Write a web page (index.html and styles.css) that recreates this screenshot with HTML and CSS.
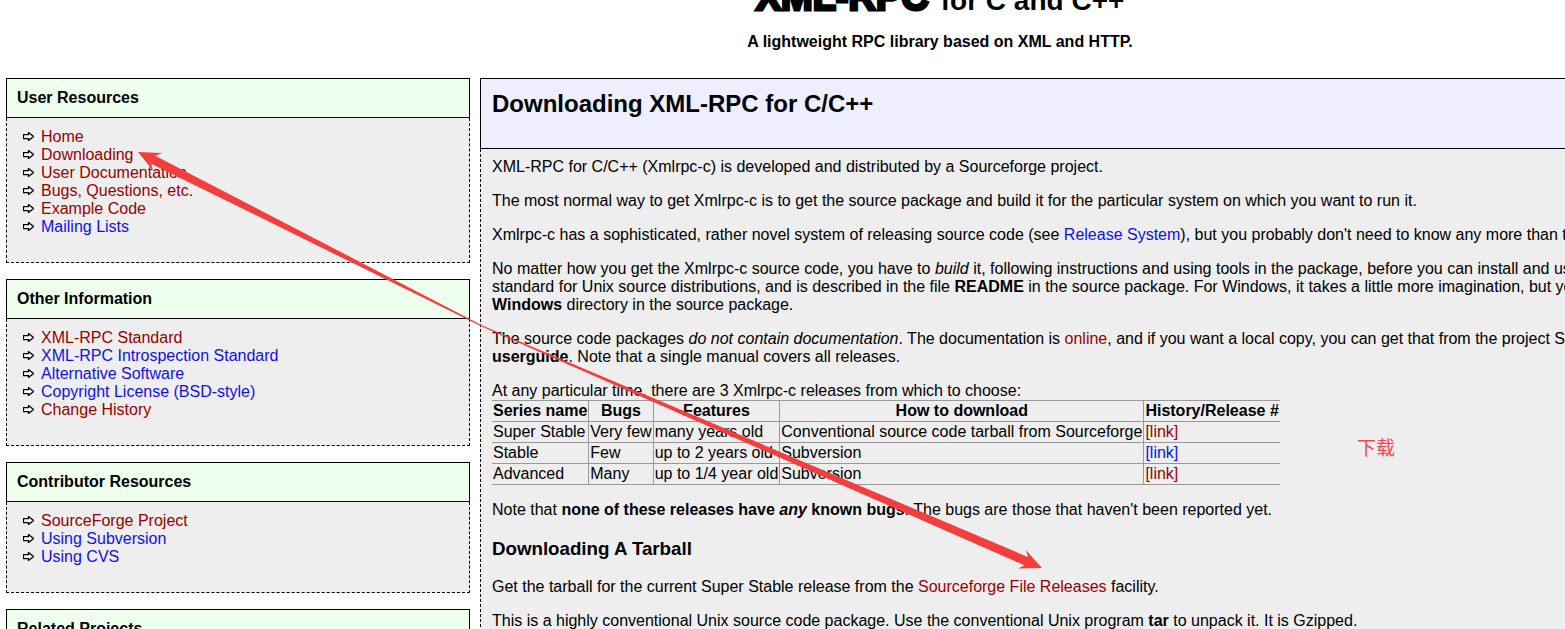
FILE: index.html
```html
<!DOCTYPE html>
<html lang="en">
<head>
<meta charset="utf-8">
<title>Downloading XML-RPC for C/C++</title>
<link rel="stylesheet" href="styles.css">
</head>
<body>
<div class="page">
  <header class="site-head">
    <h1 class="site-title"><span class="heavy">XML-RPC</span><span class="light">for C and C++</span></h1>
    <p class="tagline">A lightweight RPC library based on XML and HTTP.</p>
  </header>

  <div class="layout">
    <aside class="side">
      <section class="box">
        <div class="box-head">User Resources</div>
        <div class="box-body">
          <ul class="nav">
            <li><svg viewBox="0 0 11 9"><path d="M0.5 2.5H5.5V0.5L10.5 4.5L5.5 8.5V6.5H0.5Z"/></svg><a class="seen" href="#">Home</a></li>
            <li><svg viewBox="0 0 11 9"><path d="M0.5 2.5H5.5V0.5L10.5 4.5L5.5 8.5V6.5H0.5Z"/></svg><a class="seen" href="#">Downloading</a></li>
            <li><svg viewBox="0 0 11 9"><path d="M0.5 2.5H5.5V0.5L10.5 4.5L5.5 8.5V6.5H0.5Z"/></svg><a class="seen" href="#">User Documentation</a></li>
            <li><svg viewBox="0 0 11 9"><path d="M0.5 2.5H5.5V0.5L10.5 4.5L5.5 8.5V6.5H0.5Z"/></svg><a class="seen" href="#">Bugs, Questions, etc.</a></li>
            <li><svg viewBox="0 0 11 9"><path d="M0.5 2.5H5.5V0.5L10.5 4.5L5.5 8.5V6.5H0.5Z"/></svg><a class="seen" href="#">Example Code</a></li>
            <li><svg viewBox="0 0 11 9"><path d="M0.5 2.5H5.5V0.5L10.5 4.5L5.5 8.5V6.5H0.5Z"/></svg><a href="#">Mailing Lists</a></li>
          </ul>
        </div>
      </section>

      <section class="box">
        <div class="box-head">Other Information</div>
        <div class="box-body">
          <ul class="nav">
            <li><svg viewBox="0 0 11 9"><path d="M0.5 2.5H5.5V0.5L10.5 4.5L5.5 8.5V6.5H0.5Z"/></svg><a class="seen" href="#">XML-RPC Standard</a></li>
            <li><svg viewBox="0 0 11 9"><path d="M0.5 2.5H5.5V0.5L10.5 4.5L5.5 8.5V6.5H0.5Z"/></svg><a href="#">XML-RPC Introspection Standard</a></li>
            <li><svg viewBox="0 0 11 9"><path d="M0.5 2.5H5.5V0.5L10.5 4.5L5.5 8.5V6.5H0.5Z"/></svg><a href="#">Alternative Software</a></li>
            <li><svg viewBox="0 0 11 9"><path d="M0.5 2.5H5.5V0.5L10.5 4.5L5.5 8.5V6.5H0.5Z"/></svg><a href="#">Copyright License (BSD-style)</a></li>
            <li><svg viewBox="0 0 11 9"><path d="M0.5 2.5H5.5V0.5L10.5 4.5L5.5 8.5V6.5H0.5Z"/></svg><a class="seen" href="#">Change History</a></li>
          </ul>
        </div>
      </section>

      <section class="box">
        <div class="box-head">Contributor Resources</div>
        <div class="box-body">
          <ul class="nav">
            <li><svg viewBox="0 0 11 9"><path d="M0.5 2.5H5.5V0.5L10.5 4.5L5.5 8.5V6.5H0.5Z"/></svg><a class="seen" href="#">SourceForge Project</a></li>
            <li><svg viewBox="0 0 11 9"><path d="M0.5 2.5H5.5V0.5L10.5 4.5L5.5 8.5V6.5H0.5Z"/></svg><a href="#">Using Subversion</a></li>
            <li><svg viewBox="0 0 11 9"><path d="M0.5 2.5H5.5V0.5L10.5 4.5L5.5 8.5V6.5H0.5Z"/></svg><a href="#">Using CVS</a></li>
          </ul>
        </div>
      </section>

      <section class="box">
        <div class="box-head">Related Projects</div>
        <div class="box-body">
          <ul class="nav">
            <li><svg viewBox="0 0 11 9"><path d="M0.5 2.5H5.5V0.5L10.5 4.5L5.5 8.5V6.5H0.5Z"/></svg><a href="#">XML-RPC for Perl</a></li>
            <li><svg viewBox="0 0 11 9"><path d="M0.5 2.5H5.5V0.5L10.5 4.5L5.5 8.5V6.5H0.5Z"/></svg><a href="#">XML-RPC for Python</a></li>
          </ul>
        </div>
      </section>
    </aside>

    <main class="main">
      <div class="main-head">
        <h2>Downloading XML-RPC for C/C++</h2>
      </div>
      <div class="main-body">
        <p>XML-RPC for C/C++ (Xmlrpc-c) is developed and distributed by a Sourceforge project.</p>
        <p>The most normal way to get Xmlrpc-c is to get the source package and build it for the particular system on which you want to run it.</p>
        <p>Xmlrpc-c has a sophisticated, rather novel system of releasing source code (see <a href="#">Release System</a>), but you probably don't need to know any more than this to get started.</p>
        <p>No matter how you get the Xmlrpc-c source code, you have to <i>build</i> it, following instructions and using tools in the package, before you can install and use it. For Unix, the build process is quite standard for Unix source distributions, and is described in the file <b>README</b> in the source package. For Windows, it takes a little more imagination, but you will find the build instructions in the <b>Windows</b> directory in the source package.</p>
        <p>The source code packages <i>do not contain documentation</i>. The documentation is <a class="seen" href="#">online</a>, and if you want a local copy, you can get that from the project Subversion repository, in the module <b>userguide</b>. Note that a single manual covers all releases.</p>
        <div class="lead">At any particular time, there are 3 Xmlrpc-c releases from which to choose:</div>
        <table class="releases">
          <tr><th>Series name</th><th>Bugs</th><th>Features</th><th>How to download</th><th>History/Release #</th></tr>
          <tr><td>Super Stable</td><td>Very few</td><td>many years old</td><td>Conventional source code tarball from Sourceforge</td><td><a class="seen" href="#">[link]</a></td></tr>
          <tr><td>Stable</td><td>Few</td><td>up to 2 years old</td><td>Subversion</td><td><a href="#">[link]</a></td></tr>
          <tr><td>Advanced</td><td>Many</td><td>up to 1/4 year old</td><td>Subversion</td><td><a class="seen" href="#">[link]</a></td></tr>
        </table>
        <p class="after-table">Note that <b>none of these releases have <i>any</i> known bugs</b>. The bugs are those that haven't been reported yet.</p>
        <h3>Downloading A Tarball</h3>
        <p>Get the tarball for the current Super Stable release from the <a class="seen" href="#">Sourceforge File Releases</a> facility.</p>
        <p>This is a highly conventional Unix source code package. Use the conventional Unix program <b>tar</b> to unpack it. It is Gzipped.</p>
      </div>
    </main>
  </div>
</div>

<div class="note-label">下载</div>
<svg class="annot" viewBox="0 0 1565 629" aria-hidden="true">
  <polygon points="481.73,326.54 151.14,163.69 153.12,170.85 138,152 162.14,153.01 155.20,155.65 482.27,325.46"/>
  <polygon points="481.76,326.55 1024.60,565.39 1017.83,568.45 1042,568 1025.77,550.09 1028.18,557.13 482.24,325.45"/>
</svg>
</body>
</html>
```

FILE: styles.css
```css
html, body {
  margin: 0;
  padding: 0;
  overflow: hidden;
  background: #ffffff;
}

body {
  position: relative;
  font-family: "Liberation Sans", Arial, sans-serif;
  font-size: 16px;
  color: #000000;
}

.page {
  width: 1880px;
}

/* ---------- site header ---------- */
.site-head {
  text-align: center;
}

.site-title {
  margin: -23px 0 0;
  height: 40px;
  font-size: 38px;
  line-height: 40px;
  font-weight: bold;
  white-space: nowrap;
}

.site-title span {
  line-height: 1;
}

.site-title .heavy {
  -webkit-text-stroke: 3px #000;
}

.site-title .light {
  font-size: 28px;
  margin-left: 12px;
}

.tagline {
  margin: 15.6px 0 0;
  font-weight: bold;
  line-height: 18px;
}

/* ---------- layout ---------- */
.layout {
  display: grid;
  grid-template-columns: 464px 1392px;
  column-gap: 10px;
  padding-left: 6px;
  margin-top: 27.4px;
  align-items: start;
}

.side {
  display: flex;
  flex-direction: column;
  gap: 16px;
}

.box-head {
  background: #eeffee;
  border: 1px solid #000;
  padding: 10px 10px;
  font-weight: bold;
  line-height: 18px;
}

.box-body {
  background: #eeeeee;
  border: 1px dashed #000;
  border-top: none;
}

.nav {
  list-style: none;
  margin: 0;
  padding: 10px 0 26px 16px;
  line-height: 18px;
}

.nav li {
  display: flex;
  align-items: center;
  gap: 7px;
}

.nav svg {
  width: 11px;
  height: 9px;
  flex: none;
  fill: #ffffff;
  stroke: #000;
  stroke-width: 1.25;
  stroke-linejoin: miter;
}

a {
  text-decoration: none;
  color: #1010ee;
}

a.seen {
  color: #990000;
}

/* ---------- main column ---------- */
.main-head {
  background: #eeeeff;
  border: 1px solid #000;
  padding: 11px 11px 30px;
}

.main-head h2 {
  margin: 0;
  font-size: 24px;
  line-height: 28px;
}

.main-body {
  background: #eeeeee;
  border: 1px dashed #000;
  border-top: none;
  padding: 9px 11px 40px;
  line-height: 18px;
}

.main-body p {
  margin: 0 0 16px;
}

.main-body .lead {
  margin: 0;
}

.main-body h3 {
  font-size: 18.72px;
  margin: 18.72px 0;
  line-height: normal;
}

.main-body p.after-table {
  margin-top: 16px;
}

.releases {
  border-collapse: collapse;
  border-top: 1px solid #999;
  border-bottom: 1px solid #999;
}

.releases th,
.releases td {
  padding: 1px;
  border-top: 1px solid #999;
  border-bottom: 1px solid #999;
  border-left: 1px solid #999;
  text-align: left;
  white-space: nowrap;
  line-height: 18px;
}

.releases th {
  font-weight: bold;
  text-align: center;
}

.releases tr > :first-child {
  border-left: none;
}

/* ---------- annotations ---------- */
.note-label {
  position: absolute;
  left: 1357px;
  top: 435px;
  font-family: "Noto Sans CJK SC", sans-serif;
  font-size: 19px;
  line-height: 24px;
  color: #f04a4a;
}

.annot {
  position: absolute;
  left: 0;
  top: 0;
  width: 1565px;
  height: 629px;
  pointer-events: none;
  fill: #f33e3e;
}
```
